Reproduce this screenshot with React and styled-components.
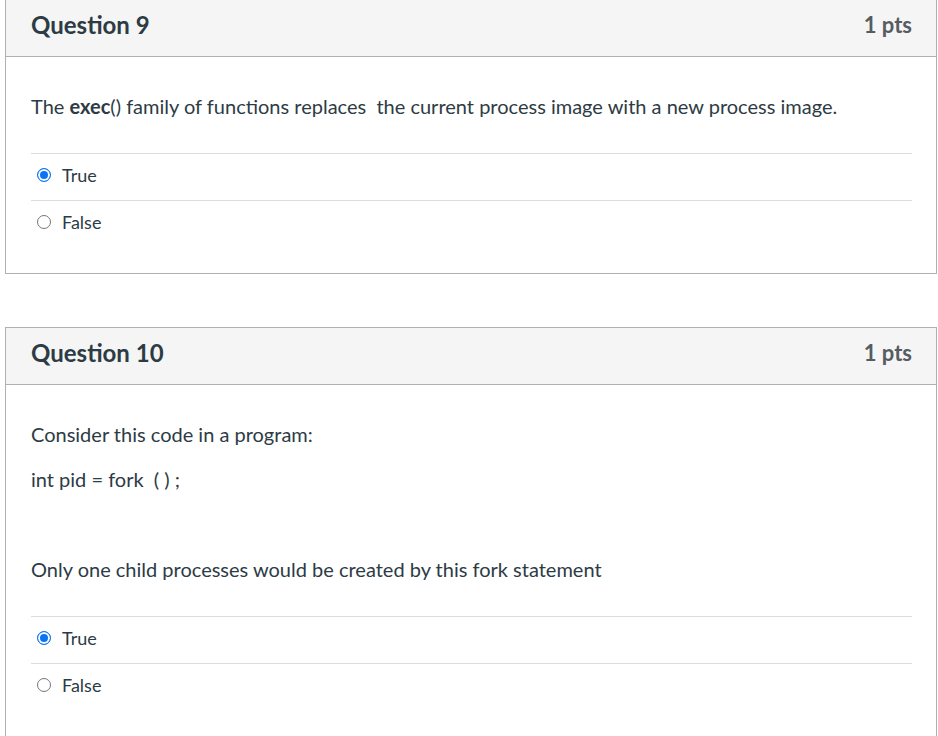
import React from 'react';
import styled, { createGlobalStyle, css } from 'styled-components';

const GlobalStyle = createGlobalStyle`
  html, body {
    margin: 0;
    padding: 0;
    background: #fff;
  }
  body {
    font-family: Lato, "Open Sans", "Liberation Sans", sans-serif;
    color: #2d3b45;
    overflow: hidden;
  }
`;

const Page = styled.div`
  display: flex;
  flex-direction: column;
  gap: 53px;
  width: 932px;
  margin: -1px 0 0 5px;
`;

const Card = styled.section`
  border: 1px solid #b0b0b0;
  background: #fff;
`;

const Header = styled.div`
  display: flex;
  align-items: center;
  justify-content: space-between;
  box-sizing: border-box;
  height: 57px;
  padding: 0 24px 7px 25px;
  background: #f5f5f5;
  border-bottom: 1px solid #b0b0b0;
`;

const Title = styled.h2`
  margin: 0;
  font-size: 24px;
  font-weight: 700;
  color: #2d3b45;
`;

const Points = styled.span`
  font-size: 22px;
  font-weight: 700;
  color: #555c62;
`;

const Body = styled.div`
  padding: 35px 24px 26px 25px;
`;

const Para = styled.p`
  margin: 0 0 17px;
  font-size: 20px;
  line-height: 28px;
  b {
    font-weight: 700;
  }
`;

const Answers = styled.div`
  margin-top: 33px;
`;

const Option = styled.label`
  display: flex;
  align-items: center;
  gap: 11px;
  box-sizing: border-box;
  height: 47px;
  padding: 0 0 5px 6px;
  border-top: 1px solid #dcdcdc;
  font-size: 18px;
  line-height: 24px;
  color: #2d3b45;
`;

const Radio = styled.span`
  box-sizing: border-box;
  width: 14px;
  height: 14px;
  border-radius: 50%;
  flex-shrink: 0;
  ${props => props.checked
    ? css`
      border: 1.5px solid #0a74f5;
      background: #0a74f5;
      box-shadow: inset 0 0 0 2px #fff;
    `
    : css`
      border: 1px solid #767676;
      background: #fff;
    `}
`;

const Question = ({ title, points, children, answers, selected }) => (
  <Card>
    <Header>
      <Title>{title}</Title>
      <Points>{points}</Points>
    </Header>
    <Body>
      {children}
      <Answers>
        {answers.map(a => (
          <Option key={a}>
            <Radio checked={a === selected} />
            {a}
          </Option>
        ))}
      </Answers>
    </Body>
  </Card>
);

export default function App() {
  return (
    <>
      <GlobalStyle />
      <Page>
        <Question title="Question 9" points="1 pts" answers={['True', 'False']} selected="True">
          <Para>
            The <b>exec</b>() family of functions replaces&nbsp; the current process image with a new process image.
          </Para>
        </Question>
        <Question title="Question 10" points="1 pts" answers={['True', 'False']} selected="True">
          <Para>Consider this code in a program:</Para>
          <Para>int pid = fork&nbsp; ( ) ;</Para>
          <Para>&nbsp;</Para>
          <Para>Only one child processes would be created by this fork statement</Para>
        </Question>
      </Page>
    </>
  );
}
